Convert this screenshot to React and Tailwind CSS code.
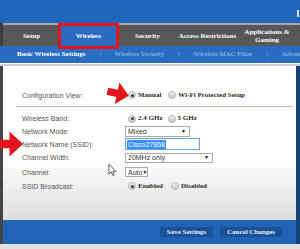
import React from 'react'

const serif = { fontFamily: '"Liberation Serif", "Times New Roman", serif' }
const sans = { fontFamily: '"Liberation Sans", Arial, sans-serif' }

function Radio({ on }) {
  return (
    <span className="inline-flex h-[8px] w-[8px] shrink-0 items-center justify-center rounded-full border border-[#b4b4b4] bg-gradient-to-b from-[#f4f4f4] to-[#c8c8c8]">
      {on && <span className="h-[3px] w-[3px] rounded-full bg-[#3a3a3a]" />}
    </span>
  )
}

function RadioGroup({ options, gaps }) {
  return (
    <div className="ml-[3px] flex items-center" style={serif}>
      {options.map((o, i) => (
        <div key={o.label} className="flex items-center gap-[2px]" style={{ marginLeft: i ? gaps[i - 1] : 0 }}>
          <Radio on={o.on} />
          <span className="text-[7px] font-bold leading-none text-[#2a2a2a]">{o.label}</span>
        </div>
      ))}
    </div>
  )
}

function Select({ value, width, height }) {
  return (
    <div
      className="flex items-center justify-between border border-[#a9a9a9] bg-white pl-[2px] pr-[3px] text-[7px] leading-none text-[#333]"
      style={{ ...sans, width, height }}
    >
      <span>{value}</span>
      <span className="text-[5px] text-black">▼</span>
    </div>
  )
}

function Row({ label, h, children }) {
  return (
    <div className="flex items-center" style={{ height: h }}>
      <div className="w-[103px] text-[7px] leading-none text-[#555]" style={sans}>{label}</div>
      {children}
    </div>
  )
}

function Arrow({ className }) {
  return (
    <svg viewBox="0 0 24 24" className={className}>
      <polygon points="0,8 11,8 11,0 24,12 11,24 11,16 0,16" fill="#e5151d" />
    </svg>
  )
}

const tabs = [
  { label: 'Setup', w: 57 },
  { label: 'Wireless', w: 57, active: true },
  { label: 'Security', w: 61 },
  { label: 'Access Restrictions', w: 59 },
  { label: 'Applications & Gaming', w: 60 },
]

export default function App() {
  return (
    <div className="relative flex h-[249px] w-[300px] flex-col overflow-hidden bg-[#e2e2e2]">
      {/* top bar */}
      <div className="flex h-[23px] items-start justify-end bg-[#2266bc] pr-[1px] pt-[10px]">
        <span className="h-[7px] w-[2px] bg-white/80" />
      </div>
      <div className="flex h-[2px]">
        <div className="w-[3px] bg-[#3c3c3c]" />
        <div className="flex-1 bg-[#a8a8a8]" />
      </div>

      {/* tabs */}
      <div className="flex h-[21px] bg-[#575757]" style={serif}>
        <div className="w-[3px] bg-[#3c3c3c]" />
        {tabs.map(t => (
          <div
            key={t.label}
            className={`flex items-center justify-center text-center text-[7px] font-bold leading-[8px] text-white ${t.active ? 'bg-[#2a6cc2]' : ''}`}
            style={{ width: t.w }}
          >
            {t.label === 'Applications & Gaming' ? (
              <span>Applications &amp;<br />Gaming</span>
            ) : (
              t.label
            )}
          </div>
        ))}
      </div>

      {/* sub nav */}
      <div className="flex h-[17px] items-center gap-[14px] overflow-hidden whitespace-nowrap bg-[#2a6cc2] pl-[17px] text-[7px] leading-none text-[#a6c6ef]" style={serif}>
        <span className="font-bold text-white">Basic Wireless Settings</span>
        <span>|</span>
        <span>Wireless Security</span>
        <span>|</span>
        <span>Wireless MAC Filter</span>
        <span>|</span>
        <span>Advanced Wireless Settings</span>
      </div>
      <div className="h-[1px] bg-white" />
      <div className="h-[2px] bg-[#cfcfcf]" />

      {/* content */}
      <div className="flex h-[154px]">
        <div className="w-[3px] bg-[#444]" />
        <div className="flex-1 bg-gradient-to-b from-white from-60% to-[#dedede] pl-[19px] pt-[22px]">
          <Row label="Configuration View:" h={14}>
            <RadioGroup
              gaps={[7]}
              options={[{ label: 'Manual', on: true }, { label: 'Wi-Fi Protected Setup' }]}
            />
          </Row>
          <div className="-ml-[6px] mr-[3px] mt-[4px] h-[1px] bg-[#b9b6e6]" />
          <div className="mt-[5px]">
            <Row label="Wireless Band:" h={13}>
              <RadioGroup gaps={[5]} options={[{ label: '2.4 GHz', on: true }, { label: '5 GHz' }]} />
            </Row>
            <Row label="Network Mode:" h={13}>
              <Select value="Mixed" width={65} height={11} />
            </Row>
            <Row label="Network Name (SSID):" h={12}>
              <div className="flex h-[12px] w-[75px] items-center border border-[#6c9fe0] bg-white pl-[1px]" style={sans}>
                <span className="bg-[#3390ff] px-[1px] text-[7px] leading-[9px] text-white">Cisco27868</span>
              </div>
            </Row>
            <Row label="Channel Width:" h={15}>
              <Select value="20MHz only" width={88} height={10} />
            </Row>
            <Row label="Channel:" h={14}>
              <Select value="Auto" width={23} height={10} />
            </Row>
            <Row label="SSID Broadcast:" h={14}>
              <RadioGroup gaps={[8]} options={[{ label: 'Enabled', on: true }, { label: 'Disabled' }]} />
            </Row>
          </div>
        </div>
        <div className="w-[4px] bg-[#173f78]" />
      </div>

      {/* bottom bar */}
      <div className="flex h-[24px]">
        <div className="w-[3px] bg-[#444]" />
        <div className="flex flex-1 items-center justify-end gap-[7px] bg-[#2163b6] pr-[14px]" style={serif}>
          <div className="flex h-[10px] w-[53px] items-center justify-center bg-[#1a5196] text-[7px] font-bold leading-none text-[#e6eefa]">Save Settings</div>
          <div className="flex h-[10px] w-[62px] items-center justify-center bg-[#1a5196] text-[7px] font-bold leading-none text-[#e6eefa]">Cancel Changes</div>
        </div>
        <div className="w-[4px] bg-[#173f78]" />
      </div>

      {/* annotations */}
      <div className="absolute left-[58px] top-[23px] h-[26px] w-[61px] border-[3px] border-[#e3141c]" />
      <Arrow className="absolute left-[107px] top-[82px] h-[23px] w-[22px] rotate-[12deg]" />
      <Arrow className="absolute left-[-2px] top-[128px] h-[32px] w-[25px]" />
      <svg viewBox="0 0 10 15" className="absolute left-[108px] top-[163px] h-[14px] w-[9px]">
        <path d="M1 1 L1 12 L3.6 9.6 L5.4 13.6 L7 12.9 L5.3 9 L8.8 9 Z" fill="white" stroke="#222" strokeWidth="0.8" strokeLinejoin="round" />
      </svg>
    </div>
  )
}
